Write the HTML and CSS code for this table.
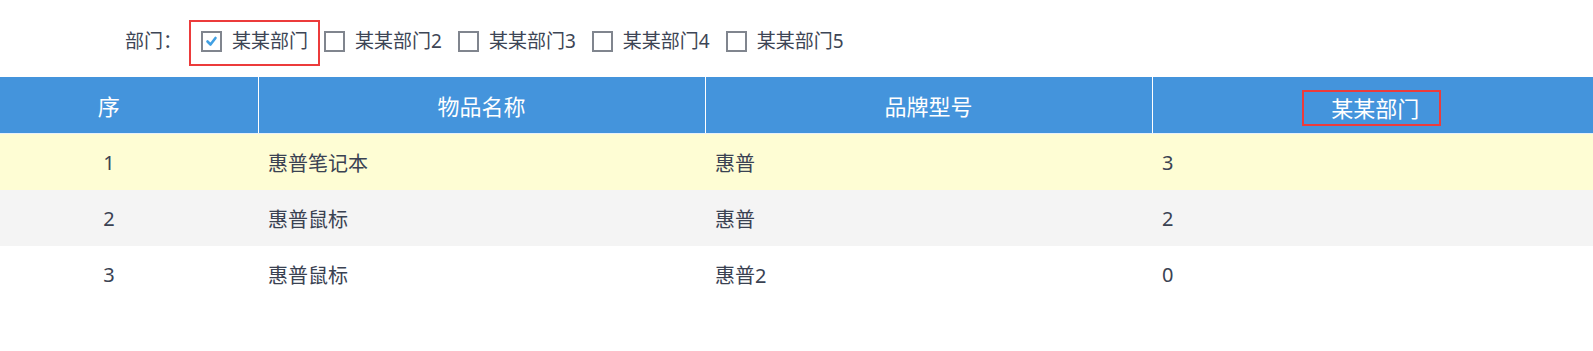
FILE: index.html
```html
<!DOCTYPE html>
<html lang="zh-CN">
<head>
<meta charset="utf-8">
<title>物品统计</title>
<link rel="stylesheet" href="styles.css">
</head>
<body>
<div class="filter">
  <span class="filter-label">部门：</span>
  <label class="opt opt-marked">
    <span class="box checked">
      <svg viewBox="0 0 17 17" width="17" height="17"><path d="M4.5 8.5 L7.5 11.5 L12.5 5" fill="none" stroke="#41a0e3" stroke-width="2.6" stroke-linecap="round" stroke-linejoin="round"/></svg>
    </span>
    <span class="opt-text">某某部门</span>
  </label>
  <label class="opt"><span class="box"></span><span class="opt-text">某某部门2</span></label>
  <label class="opt"><span class="box"></span><span class="opt-text">某某部门3</span></label>
  <label class="opt"><span class="box"></span><span class="opt-text">某某部门4</span></label>
  <label class="opt"><span class="box"></span><span class="opt-text">某某部门5</span></label>
</div>

<div class="grid-wrap">
  <table class="grid">
    <colgroup>
      <col class="c-no">
      <col class="c-name">
      <col class="c-brand">
      <col class="c-dept">
    </colgroup>
    <thead>
      <tr>
        <th>序</th>
        <th>物品名称</th>
        <th>品牌型号</th>
        <th><span class="hl">某某部门</span></th>
      </tr>
    </thead>
    <tbody>
      <tr class="row-hover">
        <td class="num">1</td>
        <td>惠普笔记本</td>
        <td>惠普</td>
        <td>3</td>
      </tr>
      <tr class="row-alt">
        <td class="num">2</td>
        <td>惠普鼠标</td>
        <td>惠普</td>
        <td>2</td>
      </tr>
      <tr>
        <td class="num">3</td>
        <td>惠普鼠标</td>
        <td>惠普2</td>
        <td>0</td>
      </tr>
    </tbody>
  </table>
</div>
</body>
</html>
```

FILE: styles.css
```css
html, body {
  margin: 0;
  padding: 0;
  background: #ffffff;
}

body {
  font-family: "Noto Sans", "Noto Sans CJK SC", sans-serif;
  color: #3a4252;
  overflow: hidden;
}

/* department filter bar */
.filter {
  display: flex;
  align-items: center;
  height: 72px;
  padding: 5px 0 0 125px;
  font-size: 19px;
  line-height: 24px;
  color: #3d4555;
}

.filter-label {
  margin-right: 19px;
}

.opt {
  position: relative;
  display: flex;
  align-items: center;
  gap: 10px;
  margin-right: 16px;
  cursor: pointer;
}

/* highlight frame around the selected department */
.opt-marked::after {
  content: "";
  position: absolute;
  left: -12px;
  right: -12px;
  top: -9px;
  bottom: -13px;
  border: 2px solid #ec3b3b;
  pointer-events: none;
}

.box {
  box-sizing: border-box;
  width: 21px;
  height: 21px;
  border: 2px solid #80858e;
  background: #ffffff;
  display: flex;
  align-items: center;
  justify-content: center;
}

.box svg {
  display: block;
}

/* data table */
.grid-wrap {
  overflow: hidden;
}

.grid {
  margin-left: -40px;
  width: 1639px;
  border-collapse: collapse;
  table-layout: fixed;
}

.c-no { width: 298px; }
.c-name { width: 447px; }
.c-brand { width: 447px; }
.c-dept { width: 447px; }

.grid th {
  height: 56px;
  padding: 0;
  background: #4494dc;
  color: #ffffff;
  font-size: 22px;
  font-weight: normal;
  text-align: center;
  border-left: 1px solid #ffffff;
  border-bottom: 1px solid #e8f1fa;
}

.grid th:first-child {
  border-left: none;
}

.grid td {
  height: 56px;
  padding: 0 0 0 10px;
  font-size: 20px;
  color: #3a4252;
  text-align: left;
}

.grid td.num {
  text-align: center;
  padding: 0;
}

.row-hover td {
  background: #fefdd4;
}

.row-alt td {
  background: #f4f4f4;
}

.hl {
  display: inline-block;
  vertical-align: middle;
  line-height: 26px;
  padding: 3px 20px 3px 27px;
  margin: 6px 8px 0 0;
  border: 2px solid #ec3b3b;
}
```
